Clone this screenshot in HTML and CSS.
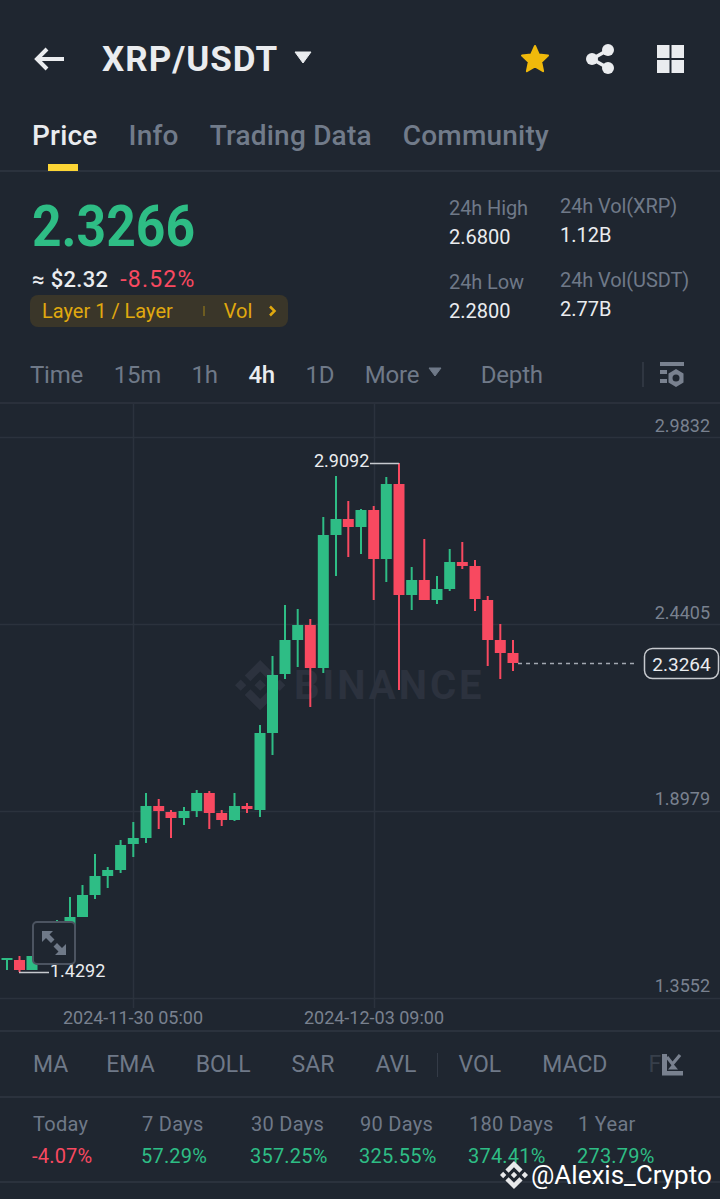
FILE: index.html
```html
<!DOCTYPE html>
<html lang="en">
<head>
    <meta charset="UTF-8">
    <meta name="viewport" content="width=device-width, initial-scale=1.0">
    <title>XRP/USDT</title>
    <link rel="stylesheet" href="styles.css">
</head>
<body>
    <div class="page">
        <header class="topbar">
            <svg class="back-icon" width="32" height="26" viewBox="0 0 32 26">
                <path d="M30 13H4M13 3 3 13l10 10" fill="none" stroke="#eaecef" stroke-width="4"/>
            </svg>
            <h1 class="pair">XRP/USDT</h1>
            <svg class="pair-caret" width="18" height="13" viewBox="0 0 18 13">
                <path d="M1 1h16l-8 11z" fill="#eaecef" stroke="#eaecef" stroke-linejoin="round"/>
            </svg>
            <div class="top-actions">
                <svg class="star-icon" width="32" height="32" viewBox="0 0 32 32">
                    <path d="M16 3l3.9 8.6 9.1 1-6.8 6.3 1.9 9.3-8.100-4.700-8.100 4.700 1.900-9.300-6.800-6.300 9.100-1z" fill="#f0b90b" stroke="#f0b90b" stroke-width="2" stroke-linejoin="round"/>
                </svg>
                <svg class="share-icon" width="30" height="32" viewBox="0 0 30 32">
                    <path d="M23 7 7 16l16 9" fill="none" stroke="#eaecef" stroke-width="3.500"/>
                    <circle cx="23" cy="7" r="6" fill="#eaecef"/>
                    <circle cx="7" cy="16" r="6" fill="#eaecef"/>
                    <circle cx="23" cy="25" r="6" fill="#eaecef"/>
                </svg>
                <svg width="28" height="28" viewBox="0 0 28 28">
                    <path d="M1 0h12.500v13H1zM15.500 0H28v13H15.500zM1 15h12.500v13H1zM15.500 15H28v13H15.500z" fill="#eaecef"/>
                </svg>
            </div>
        </header>

        <nav class="tabs">
            <a class="tab active">Price</a>
            <a class="tab">Info</a>
            <a class="tab">Trading Data</a>
            <a class="tab">Community</a>
        </nav>

        <section class="summary">
            <div class="summary-left">
                <div class="last-price">2.3266</div>
                <div class="fiat-line">
                    <span class="fiat">≈ $2.32</span>
                    <span class="change">-8.52%</span>
                </div>
                <div class="tag-pill">
                    <span class="tag-name">Layer 1 / Layer</span>
                    <i class="tag-sep"></i>
                    <span class="tag-vol">Vol</span>
                    <svg width="9" height="12" viewBox="0 0 9 12">
                        <path d="M2 1.500 6.500 6 2 10.500" fill="none" stroke="#e0a90f" stroke-width="2.500"/>
                    </svg>
                </div>
            </div>
            <div class="stat-col first">
                <div class="stat-label">24h High</div>
                <div class="stat-value">2.6800</div>
                <div class="stat-label lower">24h Low</div>
                <div class="stat-value">2.2800</div>
            </div>
            <div class="stat-col">
                <div class="stat-label">24h Vol(XRP)</div>
                <div class="stat-value">1.12B</div>
                <div class="stat-label lower">24h Vol(USDT)</div>
                <div class="stat-value">2.77B</div>
            </div>
        </section>

        <div class="intervals">
            <span>Time</span>
            <span>15m</span>
            <span>1h</span>
            <span class="active">4h</span>
            <span>1D</span>
            <span class="more">More
                <svg width="14" height="10" viewBox="0 0 14 10">
                    <path d="M1 1h12L7 9z" fill="#6f7988" stroke="#6f7988" stroke-linejoin="round"/>
                </svg>
            </span>
            <span class="depth">Depth</span>
            <i class="interval-sep"></i>
            <svg class="settings-icon" width="24" height="26" viewBox="0 0 24 26">
                <path d="M0 0h24v4H0zM0 8h7v4H0zM0 17h7v4H0z" fill="#79818f"/>
                <path fill-rule="evenodd" d="M16 7l7.500 4.500v9L16 25l-7.500-4.500v-9zM16 12.500a3.500 3.500 0 1 0 0 7 3.500 3.500 0 0 0 0-7z" fill="#79818f"/>
            </svg>
        </div>

        <div class="chart">
            <svg id="candles" class="chart-svg" width="720" height="626" viewBox="0 404 720 626">
                <g class="grid">
                    <path d="M0 437.500H720M0 624.500H720M0 811.500H720M0 998.500H720M133.500 404V1008M374.500 404V1008"/>
                </g>
                <g class="watermark">
                    <path transform="translate(235 660) scale(2.1)" d="M16.624 13.920l2.718 2.715-7.353 7.353-7.353-7.352 2.718-2.716 4.635 4.659 4.636-4.659zm4.637-4.637L24 12l-2.715 2.716L18.568 12l2.693-2.717zm-9.272.001l2.716 2.691-2.716 2.718L9.272 12l2.717-2.715zm-9.272-.001L5.409 12l-2.691 2.692L0 12l2.717-2.717zM11.989.012l7.353 7.329-2.718 2.715-4.635-4.636-4.636 4.660-2.717-2.715 7.353-7.353z"/>
                    <text x="294" y="699">BINANCE</text>
                </g>
                <g class="axis">
                    <text x="710" y="432">2.9832</text>
                    <text x="710" y="619">2.4405</text>
                    <text x="710" y="805">1.8979</text>
                    <text x="710" y="992">1.3552</text>
                </g>
                <g class="dates">
                    <text x="133" y="1024">2024-11-30 05:00</text>
                    <text x="374" y="1024">2024-12-03 09:00</text>
                </g>
                <g id="candle-group"></g>
                <g class="extreme">
                    <path d="M370 463.500H399M19 972.500H49"/>
                    <text x="314" y="467">2.9092</text>
                    <text x="50" y="977">1.4292</text>
                </g>
                <path class="last-line" d="M518 663.500H636"/>
                <rect class="last-box" x="644.500" y="648.500" width="74" height="30" rx="8"/>
                <text class="last-text" x="681.500" y="670.500">2.3264</text>
                <rect class="expand-box" x="33" y="922" width="42" height="42" rx="4"/>
                <path class="expand-icon" d="M42 931h11l-3.500 3.500 5 5-3.500 3.500-5-5-4 4zM66 955H55l3.500-3.500-5-5 3.500-3.500 5 5 4-4z"/>
            </svg>
        </div>

        <div class="indicators">
            <div class="indicator-list">
                <span class="first-indicator">MA</span>
                <span>EMA</span>
                <span>BOLL</span>
                <span>SAR</span>
                <span>AVL</span>
                <i class="indicator-sep"></i>
                <span>VOL</span>
                <span>MACD</span>
                <span class="faded">F</span>
            </div>
            <svg class="indicator-icon" width="22" height="22" viewBox="0 0 22 22">
                <path d="M0 0h5v17h16v4.500H0z" fill="#79818f"/>
                <path d="M5 3l5.500 7L18 1" fill="none" stroke="#79818f" stroke-width="3.200"/>
                <path d="M6 15.500h10l-5-6z" fill="#79818f"/>
            </svg>
        </div>

        <div class="returns">
            <div class="return-item">
                <span class="return-label">Today</span>
                <span class="return-value down">-4.07%</span>
            </div>
            <div class="return-item">
                <span class="return-label">7 Days</span>
                <span class="return-value">57.29%</span>
            </div>
            <div class="return-item">
                <span class="return-label">30 Days</span>
                <span class="return-value">357.25%</span>
            </div>
            <div class="return-item">
                <span class="return-label">90 Days</span>
                <span class="return-value">325.55%</span>
            </div>
            <div class="return-item">
                <span class="return-label">180 Days</span>
                <span class="return-value">374.41%</span>
            </div>
            <div class="return-item">
                <span class="return-label">1 Year</span>
                <span class="return-value">273.79%</span>
            </div>
        </div>

        <div class="credit">
            <svg width="28" height="28" viewBox="0 0 24 24">
                <path d="M16.624 13.920l2.718 2.715-7.353 7.353-7.353-7.352 2.718-2.716 4.635 4.659 4.636-4.659zm4.637-4.637L24 12l-2.715 2.716L18.568 12l2.693-2.717zm-9.272.001l2.716 2.691-2.716 2.718L9.272 12l2.717-2.715zm-9.272-.001L5.409 12l-2.691 2.692L0 12l2.717-2.717zM11.989.012l7.353 7.329-2.718 2.715-4.635-4.636-4.636 4.660-2.717-2.715 7.353-7.353z" fill="#e8e9eb"/>
            </svg>
            <span>@Alexis_Crypto</span>
        </div>
    </div>
    <script src="chart.js"></script>
</body>
</html>
```

FILE: styles.css
```css
* {
    box-sizing: border-box;
}
body {
    margin: 0;
    background-color: #1f2630;
    font-family: 'Roboto', 'Liberation Sans', sans-serif;
    color: #eaecef;
}
.page {
    position: relative;
    width: 720px;
    height: 1199px;
    overflow: hidden;
}
.topbar {
    display: flex;
    align-items: center;
    height: 118px;
    padding: 0 36px 0 34px;
}
.back-icon {
    margin-right: 36px;
}
.pair {
    margin: 0;
    font-size: 35px;
    font-weight: 700;
    letter-spacing: 1px;
}
.pair-caret {
    margin: -4px 0 0 16px;
}
.top-actions {
    display: flex;
    align-items: center;
    margin-left: auto;
}
.star-icon {
    margin-right: 34px;
}
.share-icon {
    margin-right: 41px;
}
.tabs {
    display: flex;
    gap: 31px;
    height: 54px;
    padding: 0 32px;
    border-bottom: 2px solid #2b323d;
}
.tab {
    position: relative;
    font-size: 28px;
    font-weight: 500;
    line-height: 35px;
    letter-spacing: 0.2px;
    color: #717b8a;
}
.tab.active {
    color: #eaecef;
}
.tab.active::after {
    content: '';
    position: absolute;
    left: 16px;
    bottom: -1px;
    width: 30px;
    height: 7px;
    background-color: #fcd535;
}
.summary {
    display: flex;
    height: 173px;
}
.summary-left {
    width: 449px;
    padding: 24px 0 0 32px;
}
.last-price {
    font-size: 58px;
    font-weight: 700;
    line-height: 60px;
    color: #2ebd85;
    transform: scaleX(0.89);
    transform-origin: left;
}
.fiat-line {
    display: flex;
    gap: 12px;
    margin-top: 10px;
    font-size: 22px;
    line-height: 28px;
}
.fiat {
    font-weight: 500;
    letter-spacing: 0.3px;
}
.change {
    font-size: 23px;
    letter-spacing: 1.200px;
    color: #f84960;
}
.tag-pill {
    display: flex;
    align-items: center;
    width: 258px;
    height: 32px;
    margin: 1px 0 0 -2px;
    padding-left: 12px;
    border-radius: 8px;
    background-color: #3a3629;
    font-size: 20px;
    color: #e0a90f;
}
.tag-sep {
    width: 2px;
    height: 10px;
    margin: 0 19px 0 30px;
    background-color: #6d5c20;
}
.tag-vol {
    margin-right: 16px;
}
.stat-col {
    width: 111px;
    padding-top: 22px;
    white-space: nowrap;
}
.stat-col.first {
    padding-top: 24px;
}
.stat-label {
    font-size: 20px;
    line-height: 24px;
    letter-spacing: -0.1px;
    color: #6f7988;
}
.stat-label.lower {
    margin-top: 21px;
}
.stat-value {
    margin-top: 5px;
    font-size: 20px;
    line-height: 24px;
    color: #eaecef;
}
.intervals {
    display: flex;
    align-items: center;
    gap: 30.500px;
    height: 59px;
    padding: 2px 30px 0;
    border-bottom: 2px solid #2a303b;
    font-size: 24px;
    letter-spacing: -0.2px;
    color: #6f7988;
}
.intervals .active {
    font-weight: 500;
    color: #eaecef;
}
.more {
    display: flex;
    align-items: center;
    gap: 9px;
}
.more svg {
    margin-top: -6px;
}
.depth {
    margin-left: 8px;
}
.interval-sep {
    width: 2px;
    height: 25px;
    margin-left: auto;
    background-color: #2f3641;
}
.settings-icon {
    margin: 0 6px 0 -14px;
}
.chart {
    height: 628px;
    border-bottom: 2px solid #2b323d;
}
.chart-svg {
    display: block;
}
.grid path {
    fill: none;
    stroke: #2b323d;
    stroke-width: 1.500;
}
.watermark path {
    fill: #2c323e;
}
.watermark text {
    font-size: 40px;
    font-weight: 700;
    letter-spacing: 3px;
    fill: #2c323e;
}
.axis text {
    font-size: 18px;
    text-anchor: end;
    fill: #79818f;
}
.dates text {
    font-size: 18px;
    text-anchor: middle;
    fill: #79818f;
}
.wick {
    stroke-width: 2;
}
.up {
    fill: #2ebd85;
    stroke: #2ebd85;
}
.down {
    fill: #f84960;
    stroke: #f84960;
}
rect.up, rect.down {
    stroke: none;
}
.extreme path {
    fill: none;
    stroke: #c6c9ce;
    stroke-width: 1.500;
}
.extreme text {
    font-size: 18px;
    fill: #eaecef;
}
.last-line {
    fill: none;
    stroke: #a2a8b1;
    stroke-width: 1.500;
    stroke-dasharray: 4 4;
}
.last-box {
    fill: #1f2630;
    stroke: #c6c9ce;
    stroke-width: 1.500;
}
.last-text {
    font-size: 19px;
    text-anchor: middle;
    fill: #eaecef;
}
.expand-box {
    fill: #1f2630;
    stroke: #4c5461;
    stroke-width: 2;
}
.expand-icon {
    fill: #6f7988;
}
.indicators {
    display: flex;
    align-items: center;
    height: 66px;
    padding: 1px 36px 0 33px;
    border-bottom: 2px solid #2b323d;
}
.indicator-list {
    display: flex;
    align-items: center;
    gap: 41px;
    width: 622px;
    font-size: 23px;
    color: #6f7988;
    white-space: nowrap;
}
.first-indicator {
    margin-right: -3px;
}
.indicator-sep {
    flex-shrink: 0;
    width: 1px;
    height: 24px;
    margin: 0 -20px 0 -21px;
    background-color: #343b47;
}
.faded {
    opacity: 0.3;
}
.indicator-icon {
    margin-left: 7px;
}
.returns {
    display: grid;
    grid-template-columns: repeat(6, 109px);
    height: 85px;
    padding: 14px 0 0 32px;
    border-bottom: 2px solid #2b323d;
}
.return-item {
    display: flex;
    flex-direction: column;
    gap: 10px;
}
.return-label {
    margin-left: 1px;
    font-size: 20px;
    line-height: 25px;
    letter-spacing: 0.3px;
    color: #6f7988;
}
.return-value {
    font-size: 20px;
    line-height: 18px;
    letter-spacing: 0.2px;
    color: #2ebd85;
}
.return-value.down {
    color: #f84960;
}
.credit {
    position: absolute;
    left: 500px;
    top: 1161px;
    display: flex;
    align-items: center;
    gap: 3px;
    font-size: 26px;
    line-height: 20px;
    color: #fff;
    white-space: nowrap;
}
```

FILE: chart.js
```js
// x, top and bottom of the body, high, low, all in page pixels
const candles = [
    [7, 958, 960, 958, 970, 'up'],
    [19.5, 960, 970, 956, 972, 'down'],
    [32, 956, 970, 956, 970, 'up'],
    [44.5, 945, 956, 940, 958, 'up'],
    [57, 938, 945, 920, 948, 'up'],
    [70, 917, 938, 897, 940, 'up'],
    [82.5, 895, 917, 885, 917, 'up'],
    [95, 876, 895, 854, 899, 'up'],
    [107.7, 870, 876, 867, 888, 'up'],
    [120.6, 845, 870, 840, 873, 'up'],
    [133.3, 838, 844, 822, 857, 'up'],
    [146, 806, 838, 793, 843, 'up'],
    [158.7, 806, 811, 799, 829, 'down'],
    [171, 812, 818, 810, 838, 'down'],
    [184, 811, 818, 807, 825, 'up'],
    [196.7, 793, 811, 790, 817, 'up'],
    [209.3, 793, 813, 791, 829, 'down'],
    [221.7, 813, 820, 810, 826, 'down'],
    [234.5, 806, 820, 793, 821, 'up'],
    [247, 806, 809, 803, 813, 'down'],
    [260, 733, 810, 725, 817, 'up'],
    [272.5, 675, 733, 656, 755, 'up'],
    [285, 640, 674, 605, 679, 'up'],
    [297.7, 625, 640, 609, 667, 'up'],
    [310.3, 625, 668, 619, 707, 'down'],
    [323.3, 535, 668, 517, 673, 'up'],
    [336, 519, 535, 476, 576, 'up'],
    [348.3, 519, 527, 501, 557, 'down'],
    [361, 510, 527, 509, 554, 'up'],
    [373.7, 510, 559, 506, 600, 'down'],
    [386.3, 484, 559, 477, 582, 'up'],
    [399, 484, 595, 463, 690, 'down'],
    [411.7, 580, 595, 567, 610, 'up'],
    [424.3, 580, 600, 539, 600, 'down'],
    [437, 589, 600, 576, 604, 'up'],
    [449.7, 562, 589, 549, 591, 'up'],
    [462.3, 562, 566, 542, 569, 'down'],
    [475, 566, 599, 560, 611, 'down'],
    [487.7, 600, 640, 596, 666, 'down'],
    [500.3, 640, 653, 624, 679, 'down'],
    [513, 653, 663, 640, 671, 'down']
];

const group = document.getElementById('candle-group');
const SVG_NS = 'http://www.w3.org/2000/svg';

candles.forEach(([x, top, bottom, high, low, side]) => {
    const wick = document.createElementNS(SVG_NS, 'line');
    wick.setAttribute('x1', x);
    wick.setAttribute('x2', x);
    wick.setAttribute('y1', high);
    wick.setAttribute('y2', low);
    wick.setAttribute('class', 'wick ' + side);
    group.appendChild(wick);

    const body = document.createElementNS(SVG_NS, 'rect');
    body.setAttribute('x', x - 5.5);
    body.setAttribute('y', top);
    body.setAttribute('width', 11);
    body.setAttribute('height', bottom - top);
    body.setAttribute('class', side);
    group.appendChild(body);
});
```
